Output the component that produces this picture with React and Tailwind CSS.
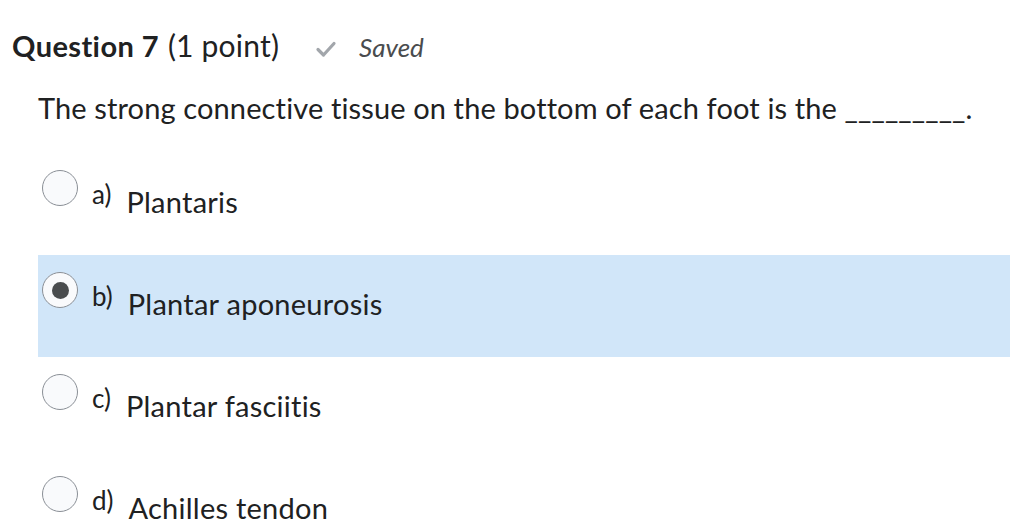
import React from 'react';

const options = [
  { letter: 'a)', text: 'Plantaris', selected: false },
  { letter: 'b)', text: 'Plantar aponeurosis', selected: true },
  { letter: 'c)', text: 'Plantar fasciitis', selected: false },
  { letter: 'd)', text: 'Achilles tendon', selected: false },
];

const Radio = ({ checked }) => (
  <div className="w-[36px] h-[36px] rounded-full border border-[#8a8f96] bg-[#f9fafc] flex items-center justify-center shrink-0">
    {checked && <div className="w-[17px] h-[17px] rounded-full bg-[#494c4e]" />}
  </div>
);

const App = () => {
  return (
    <div className="w-[1010px] h-[532px] overflow-hidden bg-white text-[#202122]" style={{ fontFamily: 'Lato, "Noto Sans", sans-serif' }}>
      <div className="flex items-baseline pl-[12px] pt-[28px] leading-[35px]">
        <span className="text-[29px] font-bold tracking-[0.4px]">Question 7</span>
        <span className="text-[30px] ml-[9px] tracking-[0.2px]">(1 point)</span>
        <svg className="ml-[36px] self-center mt-[4px]" width="22" height="18" viewBox="0 0 22 18">
          <path d="M3 9.5 L8.5 15 L19 3.5" fill="none" stroke="#a2a6ab" strokeWidth="3.2" strokeLinecap="round" strokeLinejoin="round" />
        </svg>
        <span className="ml-[22px] text-[26px] italic text-[#494c4e]">Saved</span>
      </div>
      <p className="ml-[38px] mt-[25px] text-[29px] leading-[35px] tracking-[0.13px]">
        The strong connective tissue on the bottom of each foot is the _________.
      </p>
      <div className="ml-[38px] mt-[28px]">
        {options.map((o) => (
          <div
            key={o.letter}
            className={`h-[102px] flex items-start pl-[4px] pt-[17px] ${o.selected ? 'bg-[#d1e6f9]' : ''}`}
          >
            <Radio checked={o.selected} />
            <span className="ml-[14px] text-[26px] leading-[30px] mt-[9px]">{o.letter}</span>
            <span className="ml-[15px] text-[29px] leading-[35px] mt-[14px] tracking-[0.25px]">{o.text}</span>
          </div>
        ))}
      </div>
    </div>
  );
};

export default App;
